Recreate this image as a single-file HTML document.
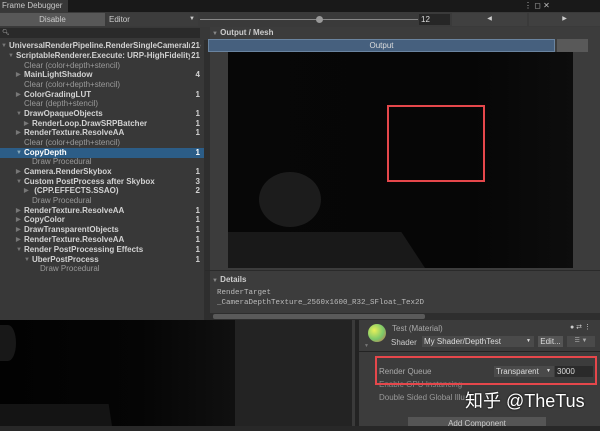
<!DOCTYPE html>
<html><head><meta charset="utf-8"><style>
*{margin:0;padding:0;box-sizing:border-box}
body{width:600px;height:426px;overflow:hidden;background:#282828;font-family:"Liberation Sans",sans-serif;font-size:8px;color:#c8c8c8;position:relative}
.a{position:absolute}
.row{position:absolute;left:0;width:204px;height:10px;line-height:10px;white-space:nowrap;font-weight:bold;color:#d2d2d2}
.row.c{font-weight:normal;color:#9a9a9a}
.row .n{position:absolute;right:4px;top:0}
.tri{display:inline-block;width:8px;color:#777;font-size:6px;line-height:10px;vertical-align:top}
</style></head><body>
<div class="a" style="left:0;top:0;width:600px;height:12px;background:#191919"></div>
<div class="a" style="left:0;top:0;width:68px;height:12px;background:#383838;line-height:12px;padding-left:2px;color:#c8c8c8">Frame Debugger</div>
<div class="a" style="left:524px;top:0;color:#bbb;line-height:12px">⋮ ◻ ✕</div>
<div class="a" style="left:0;top:12px;width:600px;height:15px;background:#3a3a3a"></div>
<div class="a" style="left:0;top:13px;width:105px;height:13px;background:#585858;text-align:center;line-height:13px;color:#ccc">Disable</div>
<div class="a" style="left:107px;top:13px;width:91px;height:13px;background:#3c3c3c;line-height:13px;padding-left:2px;color:#ccc">Editor<span style="position:absolute;right:3px;font-size:6px">▼</span></div>
<div class="a" style="left:200px;top:19px;width:218px;height:1px;background:#888"></div>
<div class="a" style="left:316px;top:16px;width:7px;height:7px;border-radius:50%;background:#999"></div>
<div class="a" style="left:419px;top:14px;width:31px;height:11px;background:#262626;line-height:11px;padding-left:2px;color:#ddd">12</div>
<div class="a" style="left:452px;top:13px;width:75px;height:13px;background:#404040;text-align:center;line-height:13px;font-size:6px;color:#ccc">◀</div>
<div class="a" style="left:529px;top:13px;width:71px;height:13px;background:#404040;text-align:center;line-height:13px;font-size:6px;color:#ccc">▶</div>
<!-- left panel -->
<div class="a" style="left:0;top:27px;width:210px;height:293px;background:#383838"></div>
<div class="a" style="left:0;top:28px;width:200px;height:10px;background:#2a2a2a;color:#aaa;font-size:6px;padding-left:2px;line-height:10px">🔍︎</div>
<div class="a" style="left:0;top:148px;width:204px;height:10px;background:#2c5d87"></div>
<div class="a" style="left:204px;top:40px;width:6px;height:280px;background:#2e2e2e"></div>
<div class="row" style="top:41px;padding-left:1px"><span class="tri">▼</span>UniversalRenderPipeline.RenderSingleCameraInte<span class="n" style="background:#383838;padding-left:1px">21</span></div>
<div class="row" style="top:51px;padding-left:8px"><span class="tri">▼</span>ScriptableRenderer.Execute: URP-HighFidelity-<span class="n" style="background:#383838;padding-left:1px">21</span></div>
<div class="row c" style="top:61px;padding-left:24px">Clear (color+depth+stencil)</div>
<div class="row" style="top:70px;padding-left:16px"><span class="tri">▶</span>MainLightShadow<span class="n">4</span></div>
<div class="row c" style="top:80px;padding-left:24px">Clear (color+depth+stencil)</div>
<div class="row" style="top:90px;padding-left:16px"><span class="tri">▶</span>ColorGradingLUT<span class="n">1</span></div>
<div class="row c" style="top:99px;padding-left:24px">Clear (depth+stencil)</div>
<div class="row" style="top:109px;padding-left:16px"><span class="tri">▼</span>DrawOpaqueObjects<span class="n">1</span></div>
<div class="row" style="top:119px;padding-left:24px"><span class="tri">▶</span>RenderLoop.DrawSRPBatcher<span class="n">1</span></div>
<div class="row" style="top:128px;padding-left:16px"><span class="tri">▶</span>RenderTexture.ResolveAA<span class="n">1</span></div>
<div class="row c" style="top:138px;padding-left:24px">Clear (color+depth+stencil)</div>
<div class="row" style="top:148px;padding-left:16px;color:#fff"><span class="tri" style="color:#8ab">▼</span>CopyDepth<span class="n">1</span></div>
<div class="row c" style="top:157px;padding-left:32px">Draw Procedural</div>
<div class="row" style="top:167px;padding-left:16px"><span class="tri">▶</span>Camera.RenderSkybox<span class="n">1</span></div>
<div class="row" style="top:177px;padding-left:16px"><span class="tri">▼</span>Custom PostProcess after Skybox<span class="n">3</span></div>
<div class="row" style="top:186px;padding-left:24px"><span class="tri">▶</span> (CPP.EFFECTS.SSAO)<span class="n">2</span></div>
<div class="row c" style="top:196px;padding-left:32px">Draw Procedural</div>
<div class="row" style="top:206px;padding-left:16px"><span class="tri">▶</span>RenderTexture.ResolveAA<span class="n">1</span></div>
<div class="row" style="top:215px;padding-left:16px"><span class="tri">▶</span>CopyColor<span class="n">1</span></div>
<div class="row" style="top:225px;padding-left:16px"><span class="tri">▶</span>DrawTransparentObjects<span class="n">1</span></div>
<div class="row" style="top:235px;padding-left:16px"><span class="tri">▶</span>RenderTexture.ResolveAA<span class="n">1</span></div>
<div class="row" style="top:245px;padding-left:16px"><span class="tri">▼</span>Render PostProcessing Effects<span class="n">1</span></div>
<div class="row" style="top:255px;padding-left:24px"><span class="tri">▼</span>UberPostProcess<span class="n">1</span></div>
<div class="row c" style="top:264px;padding-left:40px">Draw Procedural</div>
<!-- right panel -->
<div class="a" style="left:210px;top:27px;width:390px;height:293px;background:#3c3c3c"></div>
<div class="a" style="left:208px;top:27px;width:392px;height:11px;line-height:11px;padding-left:4px;font-weight:bold;color:#ccc"><span style="font-size:6px;color:#888">▼</span> Output / Mesh</div>
<div class="a" style="left:208px;top:39px;width:347px;height:13px;background:#46607e;border:1px solid #6a84a0;text-align:center;line-height:11px;color:#ddd">Output</div>
<div class="a" style="left:557px;top:39px;width:31px;height:13px;background:#595959"></div>
<div class="a" style="left:228px;top:52px;width:345px;height:216px;background:linear-gradient(90deg,#070707 0%,#060606 70%,#0d0d0d 100%)"></div>
<div class="a" style="left:228px;top:232px;width:197px;height:36px;background:#191919;clip-path:polygon(0 0,88% 0,100% 100%,0 100%)"></div>
<div class="a" style="left:259px;top:172px;width:62px;height:55px;border-radius:50%;background:#1c1c1c"></div>
<div class="a" style="left:387px;top:105px;width:98px;height:77px;border:2px solid #e5474b"></div>
<div class="a" style="left:205px;top:270px;width:395px;height:1px;background:#2a2a2a"></div>
<div class="a" style="left:208px;top:275px;font-weight:bold;color:#ccc;padding-left:4px"><span style="font-size:6px;color:#888">▼</span> Details</div>
<div class="a" style="left:217px;top:288px;font-family:'Liberation Mono',monospace;font-size:7.5px;color:#bbb;line-height:10px">RenderTarget<br>_CameraDepthTexture_2560x1600_R32_SFloat_Tex2D</div>
<div class="a" style="left:205px;top:313px;width:395px;height:7px;background:#2e2e2e"></div>
<div class="a" style="left:213px;top:314px;width:212px;height:5px;background:#5a5a5a;border-radius:2px"></div>
<!-- bottom -->
<div class="a" style="left:0;top:320px;width:600px;height:106px;background:#232323"></div>
<div class="a" style="left:0;top:320px;width:235px;height:106px;background:linear-gradient(90deg,#020202 0%,#050505 60%,#101010 100%)"></div>
<div class="a" style="left:0;top:325px;width:16px;height:36px;border-radius:0 50% 50% 0;background:#181818"></div>
<div class="a" style="left:0;top:404px;width:112px;height:22px;background:#141414;clip-path:polygon(0 0,97% 0,100% 100%,0 100%)"></div>
<div class="a" style="left:352px;top:320px;width:3px;height:106px;background:#3a3a3a"></div>
<div class="a" style="left:359px;top:320px;width:241px;height:106px;background:#3c3c3c"></div>
<div class="a" style="left:359px;top:351px;width:241px;height:1px;background:#232323"></div>
<div class="a" style="left:368px;top:324px;width:18px;height:18px;border-radius:50%;background:radial-gradient(circle at 35% 35%,#e8f05a,#7cc86a 55%,#d06848)"></div>
<div class="a" style="left:392px;top:324px;color:#aaa">Test (Material)</div>
<div class="a" style="left:570px;top:323px;color:#ccc;font-size:7px">● ⇄ ⋮</div>
<div class="a" style="left:391px;top:338px;color:#ccc">Shader</div>
<div class="a" style="left:422px;top:336px;width:112px;height:11px;background:#4a4a4a;line-height:11px;padding-left:2px;color:#ddd">My Shader/DepthTest<span style="position:absolute;right:3px;font-size:5px">▼</span></div>
<div class="a" style="left:538px;top:336px;width:25px;height:11px;background:#555;line-height:11px;text-align:center;color:#ddd">Edit...</div>
<div class="a" style="left:567px;top:336px;width:28px;height:11px;background:#4a4a4a;line-height:11px;text-align:center;color:#aaa;font-size:6px">☰ ▼</div>
<div class="a" style="left:364px;top:343px;font-size:5px;color:#777">▼</div>
<div class="a" style="left:379px;top:367px;color:#aaa">Render Queue</div>
<div class="a" style="left:494px;top:366px;width:60px;height:11px;background:#4a4a4a;line-height:11px;padding-left:2px;color:#ddd">Transparent<span style="position:absolute;right:3px;font-size:5px">▼</span></div>
<div class="a" style="left:555px;top:366px;width:38px;height:11px;background:#2a2a2a;line-height:11px;padding-left:2px;color:#ddd">3000</div>
<div class="a" style="left:379px;top:380px;color:#888">Enable GPU Instancing</div>
<div class="a" style="left:379px;top:393px;color:#999">Double Sided Global Illu</div>
<div class="a" style="left:375px;top:356px;width:222px;height:29px;border:2px solid #e5474b"></div>
<div class="a" style="left:408px;top:417px;width:138px;height:9px;background:#555;text-align:center;color:#ccc;line-height:14px">Add Component</div>
<div class="a" style="left:465px;top:387px;font-family:'Liberation Sans','Noto Sans CJK SC',sans-serif;font-size:18px;color:#fff;text-shadow:0 0 2px #000">知乎 @TheTus</div>
</body></html>
